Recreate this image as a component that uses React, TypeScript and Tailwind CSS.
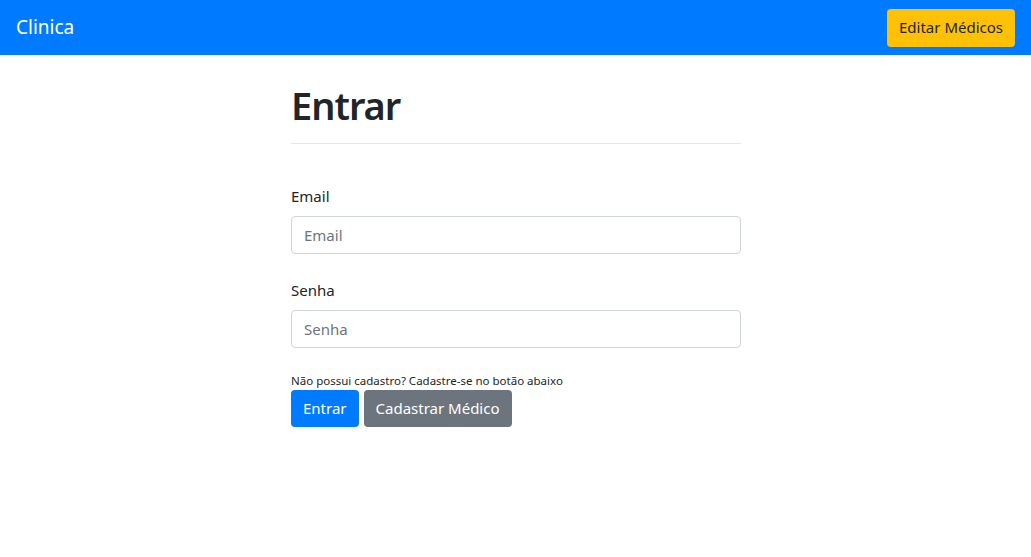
const font = { fontFamily: '"Noto Sans", "Open Sans", sans-serif' };

const App = () => {
  return (
    <div className="min-h-screen bg-white text-[#212529]" style={font}>
      <nav className="h-[55px] bg-[#007bff] flex items-center justify-between px-4">
        <span className="text-white text-[19px] leading-none">Clinica</span>
        <button className="h-[38px] px-3 bg-[#ffc107] text-[#212529] text-[15px] rounded-[4px]">
          Editar Médicos
        </button>
      </nav>

      <div className="w-[450px] ml-[291px]">
        <h1 className="text-[38px] font-semibold leading-[48px] mt-[26px] mb-[14px] tracking-[-1px]">
          Entrar
        </h1>
        <hr className="border-0 border-t border-[#e5e5e5] mt-[8px] mb-[40px]" />

        <form>
          <div>
            <label htmlFor="email" className="block text-[15px] leading-[24px] mb-[8px]">
              Email
            </label>
            <input
              id="email"
              type="email"
              placeholder="Email"
              className="block w-full h-[38px] px-3 border border-[#ced4da] rounded-[4px] text-[15px] placeholder:text-[#6c757d] focus:outline-none"
            />
          </div>
          <div className="mt-[24px]">
            <label htmlFor="senha" className="block text-[15px] leading-[24px] mb-[8px]">
              Senha
            </label>
            <input
              id="senha"
              type="password"
              placeholder="Senha"
              className="block w-full h-[38px] px-3 border border-[#ced4da] rounded-[4px] text-[15px] placeholder:text-[#6c757d] focus:outline-none"
            />
          </div>

          <p className="mt-[23px] text-[11.5px] leading-[19px]">
            Não possui cadastro? Cadastre-se no botão abaixo
          </p>
          <div className="flex gap-[5px]">
            <button
              type="submit"
              className="h-[37px] px-3 bg-[#007bff] text-white text-[15px] rounded-[4px]"
            >
              Entrar
            </button>
            <button
              type="button"
              className="h-[37px] px-3 bg-[#6c757d] text-white text-[15px] rounded-[4px]"
            >
              Cadastrar Médico
            </button>
          </div>
        </form>
      </div>
    </div>
  );
};

export default App;
